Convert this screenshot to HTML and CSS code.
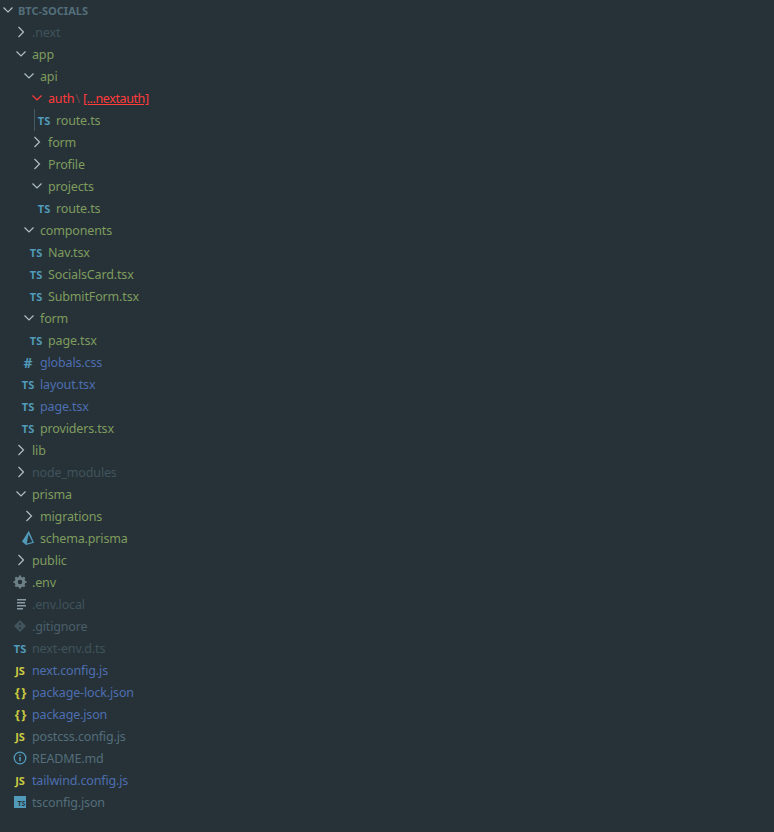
FILE: index.html
```html
<!DOCTYPE html>
<html>
<head>
    <meta charset="UTF-8">
    <meta name="viewport" content="width=device-width, initial-scale=1.0">
    <title>Explorer</title>
    <link rel="stylesheet" href="styles.css">
</head>
<body>
    <svg class="defs" width="0" height="0">
        <symbol id="open" viewBox="0 0 16 16"><path d="M3.500 5.500 8 10l4.500-4.500" fill="none" stroke="currentColor" stroke-width="1.200"/></symbol>
        <symbol id="closed" viewBox="0 0 16 16"><path d="M5.500 3 10.500 8l-5 5" fill="none" stroke="currentColor" stroke-width="1.200"/></symbol>
    </svg>
    <div class="tree">
        <div class="row root"><svg class="chev"><use href="#open"/></svg><span class="title">BTC-SOCIALS</span></div>
        <div class="row d1 dim"><svg class="chev"><use href="#closed"/></svg><span>.next</span></div>
        <div class="row d1 green"><svg class="chev"><use href="#open"/></svg><span>app</span></div>
        <div class="row d2 green"><svg class="chev"><use href="#open"/></svg><span>api</span></div>
        <div class="row d3 red"><svg class="chev"><use href="#open"/></svg><span>auth</span><span class="sep">\</span><span class="under">[...nextauth]</span></div>
        <div class="row d4 green guide"><i class="ico ts">TS</i><span>route.ts</span></div>
        <div class="row d3 green"><svg class="chev"><use href="#closed"/></svg><span>form</span></div>
        <div class="row d3 green"><svg class="chev"><use href="#closed"/></svg><span>Profile</span></div>
        <div class="row d3 green"><svg class="chev"><use href="#open"/></svg><span>projects</span></div>
        <div class="row d4 green"><i class="ico ts">TS</i><span>route.ts</span></div>
        <div class="row d2 green"><svg class="chev"><use href="#open"/></svg><span>components</span></div>
        <div class="row d3 green"><i class="ico ts">TS</i><span>Nav.tsx</span></div>
        <div class="row d3 green"><i class="ico ts">TS</i><span>SocialsCard.tsx</span></div>
        <div class="row d3 green"><i class="ico ts">TS</i><span>SubmitForm.tsx</span></div>
        <div class="row d2 green"><svg class="chev"><use href="#open"/></svg><span>form</span></div>
        <div class="row d3 green"><i class="ico ts">TS</i><span>page.tsx</span></div>
        <div class="row d2 blue"><i class="ico hash">#</i><span>globals.css</span></div>
        <div class="row d2 blue"><i class="ico ts">TS</i><span>layout.tsx</span></div>
        <div class="row d2 blue"><i class="ico ts">TS</i><span>page.tsx</span></div>
        <div class="row d2 green"><i class="ico ts">TS</i><span>providers.tsx</span></div>
        <div class="row d1 green"><svg class="chev"><use href="#closed"/></svg><span>lib</span></div>
        <div class="row d1 dim"><svg class="chev"><use href="#closed"/></svg><span>node_modules</span></div>
        <div class="row d1 green"><svg class="chev"><use href="#open"/></svg><span>prisma</span></div>
        <div class="row d2 green"><svg class="chev"><use href="#closed"/></svg><span>migrations</span></div>
        <div class="row d2 green">
            <svg class="file" viewBox="0 0 16 16"><path d="M7.800.800 1 11.500 5 15l8-2.200z" fill="#519aba"/><path d="M7.500 4.200 5.800 13.500l5.600-1.500z" fill="#263238"/></svg>
            <span>schema.prisma</span>
        </div>
        <div class="row d1 green"><svg class="chev"><use href="#closed"/></svg><span>public</span></div>
        <div class="row d1 green">
            <svg class="file" viewBox="0 0 16 16"><circle cx="7" cy="8" r="3.800" fill="none" stroke="#6d8086" stroke-width="3"/><path d="M7 1.500v13M.500 8h13M2.400 3.400l9.200 9.200M11.600 3.400l-9.200 9.200" stroke="#6d8086" stroke-width="2.200" stroke-dasharray="2.500 8 2.500"/></svg>
            <span>.env</span>
        </div>
        <div class="row d1 dim">
            <svg class="file" viewBox="0 0 16 16"><path d="M4 3h9v1.500H4zM4 6h8v1.500H4zM4 9h9v1.500H4zM4 12h6v1.500H4z" fill="#8b9ba3"/></svg>
            <span>.env.local</span>
        </div>
        <div class="row d1 gray-dim">
            <svg class="file" viewBox="0 0 16 16"><path d="M7 2 13 8 7 14 1 8z" fill="#41535b"/><circle cx="7" cy="6" r="1" fill="#263238"/><circle cx="7" cy="10" r="1" fill="#263238"/></svg>
            <span>.gitignore</span>
        </div>
        <div class="row d1 dim"><i class="ico ts">TS</i><span>next-env.d.ts</span></div>
        <div class="row d1 blue"><i class="ico js">JS</i><span>next.config.js</span></div>
        <div class="row d1 blue"><i class="ico json">{ }</i><span>package-lock.json</span></div>
        <div class="row d1 blue"><i class="ico json">{ }</i><span>package.json</span></div>
        <div class="row d1 gray"><i class="ico js">JS</i><span>postcss.config.js</span></div>
        <div class="row d1 gray">
            <svg class="file" viewBox="0 0 16 16"><circle cx="7" cy="8" r="5.800" fill="none" stroke="#519aba" stroke-width="1.300"/><path d="M7 7v4.200M7 4.500v1.300" stroke="#519aba" stroke-width="1.600"/></svg>
            <span>README.md</span>
        </div>
        <div class="row d1 blue"><i class="ico js">JS</i><span>tailwind.config.js</span></div>
        <div class="row d1 gray"><i class="ico tsbox">TS</i><span>tsconfig.json</span></div>
    </div>
</body>
</html>
```

FILE: styles.css
```css
body {
    margin: 0;
    background-color: #263238;
    font-family: "Noto Sans", "Open Sans", sans-serif;
    font-size: 12.5px;
    letter-spacing: -0.15px;
    height: 832px;
    overflow: hidden;
}

.defs {
    display: block;
    height: 0;
}

.tree {
    margin-top: -1px;
}

.row {
    display: flex;
    align-items: center;
    height: 22px;
    white-space: nowrap;
    color: #7f9c5e;
}

.root {
    padding-left: 0;
    color: #546e7a;
}

.title {
    font-size: 11px;
    font-weight: 700;
    letter-spacing: 0;
    margin-left: -1px;
}

.d1 { padding-left: 13px; }
.d2 { padding-left: 21px; }
.d3 { padding-left: 29px; }
.d4 { padding-left: 37px; }

.chev,
.file,
.ico {
    flex: none;
    width: 16px;
    height: 16px;
    margin-right: 3px;
}

.chev {
    color: #b0bec5;
}

.ico {
    display: flex;
    align-items: center;
    justify-content: center;
    font-style: normal;
    font-weight: 700;
    font-size: 11px;
    letter-spacing: 0;
    padding-right: 2px;
    box-sizing: border-box;
}

.ts { color: #519aba; }
.js { color: #cbcb41; }
.hash { color: #519aba; font-size: 14px; }
.json { color: #cbcb41; font-size: 13px; letter-spacing: -1px; }

.tsbox {
    width: 12px;
    height: 12px;
    margin: 0 6px 0 1px;
    padding: 3px 0 0 3px;
    font-size: 7px;
    line-height: 1;
    background-color: #519aba;
    color: #263238;
}

.green { color: #7f9c5e; }
.blue { color: #4e6eb0; }
.gray { color: #546e7a; }
.gray-dim { color: #4b5f69; }
.dim { color: #41535b; }

.red,
.red .chev {
    color: #ff3b3b;
}

.sep {
    color: #6b4a4c;
    margin: 0 3px 0 1px;
}

.under {
    letter-spacing: -0.4px;
    text-decoration: underline;
}

.guide {
    position: relative;
}

.guide::before {
    content: "";
    position: absolute;
    left: 34px;
    top: 0;
    width: 1px;
    height: 22px;
    background-color: #455a64;
}
```
